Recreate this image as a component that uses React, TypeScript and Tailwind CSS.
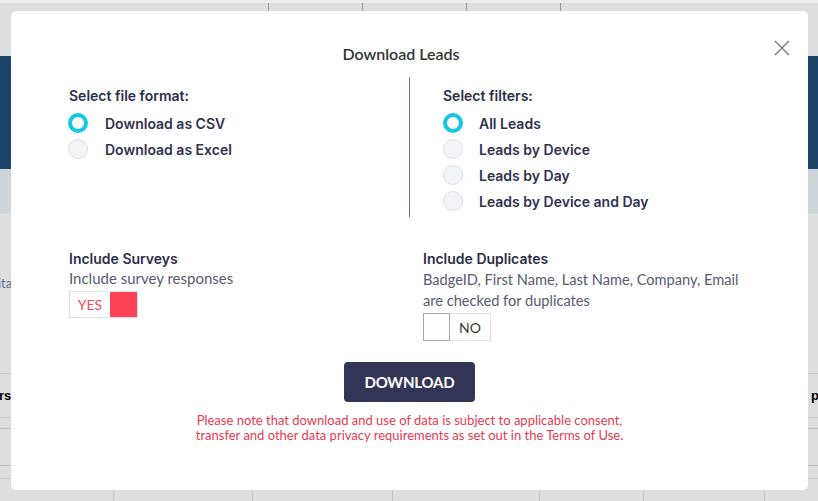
import React, { useState } from "react";

const fileFormats = ["Download as CSV", "Download as Excel"];
const filters = ["All Leads", "Leads by Device", "Leads by Day", "Leads by Device and Day"];

function Radio({ checked }: { checked: boolean }) {
  return checked ? (
    <span className="block w-5 h-5 rounded-full border-[4px] border-[#16c6e6] bg-white shrink-0" />
  ) : (
    <span className="block w-5 h-5 rounded-full border border-[#dfe1e8] bg-[#f3f4f7] shrink-0" />
  );
}

function BackgroundPage() {
  return (
    <div className="w-[818px] h-[501px] bg-[#dedede] flex flex-col overflow-hidden">
      {/* top strip with table header lines */}
      <div className="h-[56px] flex border-t-[3px] border-[#ececec]">
        <div className="w-[268px]" />
        <div className="w-[94px] border-l border-[#9a9a9a] h-[9px]" />
        <div className="w-[104px] border-l border-[#9a9a9a] h-[9px]" />
        <div className="w-[94px] border-l border-[#9a9a9a] h-[9px]" />
        <div className="border-l border-[#9a9a9a] h-[9px]" />
      </div>
      <div className="h-[113px] bg-[#1b4468]" />
      <div className="h-[45px] bg-[#ced5d9]" />
      <div className="h-[159px] pt-[56px]">
        <span className="text-[13px] text-[#5b6f92] ml-[-2px]" style={{ fontFamily: "Lato, sans-serif" }}>
          ita
        </span>
      </div>
      <div className="h-[44px] border-t border-[#c9c9c9] flex items-center justify-between">
        <span className="text-[13px] font-bold text-black ml-[-1px]" style={{ fontFamily: "'Liberation Sans', sans-serif" }}>
          rs
        </span>
        <span className="text-[13px] font-bold text-black mr-[-1px]" style={{ fontFamily: "'Liberation Sans', sans-serif" }}>
          p
        </span>
      </div>
      <div className="h-[11px] border-t border-[#c9c9c9]" />
      <div className="h-[37px] border-t border-[#bdbdbd]" />
      <div className="h-[13px] border-t border-[#bdbdbd]" />
      <div className="flex-1 border-t border-[#c9c9c9] flex">
        <div className="w-[113px]" />
        <div className="w-[139px] border-l border-[#c4c4c4]" />
        <div className="w-[140px] border-l border-[#c4c4c4]" />
        <div className="w-[147px] border-l border-[#c4c4c4]" />
        <div className="w-[104px] border-l border-[#c4c4c4]" />
        <div className="w-[121px] border-l border-[#c4c4c4]" />
        <div className="flex-1 border-l border-[#c4c4c4]" />
      </div>
    </div>
  );
}

export default function App() {
  const [format, setFormat] = useState(0);
  const [filter, setFilter] = useState(0);
  const [surveys, setSurveys] = useState(true);
  const [duplicates, setDuplicates] = useState(false);

  const inter = { fontFamily: "Inter, 'Noto Sans', sans-serif" };
  const lato = { fontFamily: "Lato, 'Open Sans', sans-serif" };

  return (
    <div className="relative w-[818px] h-[501px] overflow-hidden">
      <BackgroundPage />

      {/* Modal */}
      <div className="absolute left-[11px] top-[11px] w-[797px] h-[479px] bg-white rounded-[5px] px-[58px]">
        <button className="absolute top-[29px] right-[18px] w-4 h-4 text-[#7a7a7a]">
          <svg viewBox="0 0 16 16" width="16" height="16" fill="none" stroke="currentColor" strokeWidth="1.4">
            <path d="M1 1L15 15M15 1L1 15" />
          </svg>
        </button>

        <h2 className="pt-[33px] pr-[17px] text-center text-[16px] leading-[20px] font-semibold text-[#343434]" style={lato}>
          Download Leads
        </h2>

        {/* Format + filters */}
        <div className="mt-[13px] flex h-[140px]">
          <div className="w-[340px] pt-[9px]">
            <p className="text-[14px] leading-[20px] font-semibold text-[#2c2e48] mb-[4px]" style={inter}>
              Select file format:
            </p>
            {fileFormats.map((f, i) => (
              <div key={f} className="h-[26px] flex items-center gap-[17px] ml-[-1px] cursor-pointer" onClick={() => setFormat(i)}>
                <Radio checked={format === i} />
                <span className="text-[14px] font-semibold text-[#30324f]" style={inter}>
                  {f}
                </span>
              </div>
            ))}
          </div>
          <div className="w-px bg-[#74758a]" />
          <div className="pl-[33px] pt-[9px]">
            <p className="text-[14px] leading-[20px] font-semibold text-[#2c2e48] mb-[4px]" style={inter}>
              Select filters:
            </p>
            {filters.map((f, i) => (
              <div key={f} className="h-[26px] flex items-center gap-[16px] cursor-pointer" onClick={() => setFilter(i)}>
                <Radio checked={filter === i} />
                <span className="text-[14px] font-semibold text-[#30324f]" style={inter}>
                  {f}
                </span>
              </div>
            ))}
          </div>
        </div>

        {/* Surveys + duplicates */}
        <div className="mt-[32px] flex">
          <div className="w-[354px]">
            <p className="text-[14px] leading-[20px] font-semibold text-[#2c2e48]" style={inter}>
              Include Surveys
            </p>
            <p className="text-[15px] leading-[19px] text-[#585b70]" style={lato}>
              Include survey responses
            </p>
            <button
              onClick={() => setSurveys(!surveys)}
              className="mt-[3px] flex h-[27px] border border-[#e2e2e2]"
            >
              <span className="w-[40px] flex items-center justify-center text-[14px] text-[#f04a5c]" style={lato}>
                YES
              </span>
              <span className="w-[27px] bg-[#ff4256]" />
            </button>
          </div>
          <div>
            <p className="text-[14px] leading-[20px] font-semibold text-[#2c2e48]" style={inter}>
              Include Duplicates
            </p>
            <p className="text-[14.6px] leading-[21px] text-[#585b70]" style={lato}>
              BadgeID, First Name, Last Name, Company, Email
              <br />
              are checked for duplicates
            </p>
            <button
              onClick={() => setDuplicates(!duplicates)}
              className="mt-[2px] flex h-[28px] border border-[#e2e2e2]"
            >
              <span className="w-[27px] h-[28px] mt-[-1px] ml-[-1px] border border-[#a9a9a9] bg-white" />
              <span className="w-[40px] flex items-center justify-center text-[14px] text-[#3a3a3a]" style={lato}>
                NO
              </span>
            </button>
          </div>
        </div>

        <div className="mt-[21px] flex justify-center">
          <button className="w-[131px] h-[40px] rounded-[4px] bg-[#333556] text-white text-[15px] font-bold tracking-[-0.2px]" style={lato}>
            DOWNLOAD
          </button>
        </div>

        <p className="mt-[11px] text-center text-[13px] leading-[15px] text-[#e83a4f]" style={lato}>
          Please note that download and use of data is subject to applicable consent,
          <br />
          transfer and other data privacy requirements as set out in the Terms of Use.
        </p>
      </div>
    </div>
  );
}
